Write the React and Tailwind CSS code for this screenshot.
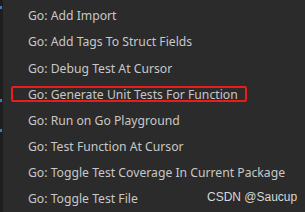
import React from "react";

const items = [
  "Go: Add Import",
  "Go: Add Tags To Struct Fields",
  "Go: Debug Test At Cursor",
  "Go: Generate Unit Tests For Function",
  "Go: Run on Go Playground",
  "Go: Test Function At Cursor",
  "Go: Toggle Test Coverage In Current Package",
  "Go: Toggle Test File",
];

export default function App() {
  return (
    <div className="relative flex w-[305px] h-[212px] overflow-hidden bg-[#2b2b2b]">
      <div className="w-[3px] h-full bg-[#1e1e1e] flex flex-col">
        <div className="mt-[6px] h-[3px] w-[2px] bg-[#3c7dc4]" />
        <div className="mt-[90px] h-[3px] w-[2px] bg-[#3c7dc4]" />
        <div className="mt-[27px] h-[3px] w-[2px] bg-[#3c7dc4]" />
      </div>
      <div className="flex-1 flex flex-col pt-[3.5px]">
        {items.map((t, i) => (
          <div key={i} className="relative h-[26.1px] flex items-center pl-[25px]">
            <span
              className="text-[12.2px] text-[#c8c8c8] whitespace-nowrap"
              style={{ fontFamily: '"Noto Sans", "Open Sans", sans-serif' }}
            >
              {t}
            </span>
            {i === 3 && (
              <div className="absolute left-[8px] top-[4.5px] w-[236px] h-[16px] border-2 border-[#ea1c1c] rounded-[2px]" />
            )}
          </div>
        ))}
      </div>
      <div
        className="absolute left-[207px] top-[189px] text-[12px] leading-[16px] text-[#d8d8d8]"
        style={{ fontFamily: '"Liberation Sans", Arial, sans-serif' }}
      >
        CSDN @Saucup
      </div>
    </div>
  );
}
